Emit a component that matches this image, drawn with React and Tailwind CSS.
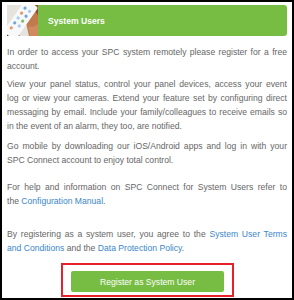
import React from "react";

const J = "block text-justify [text-align-last:justify]";
const L = "block";

function Thumb() {
  return (
    <svg width="31" height="31" viewBox="0 0 31 31" className="block shrink-0">
      <rect width="31" height="31" fill="#e6e2de" />
      <path d="M15 0 H31 V31 H22 Z" fill="#c07a4c" />
      <path d="M23 0 H31 V10 Z" fill="#8e4e2c" />
      <path d="M0 21 L0 31 L13 31 Z" fill="#3d3532" />
      <g transform="rotate(35 14 15)">
        <rect x="6" y="-5" width="15" height="40" rx="2" fill="#f6f8fa" />
        <circle cx="10.5" cy="3" r="1.6" fill="#6fa6da" />
        <circle cx="16" cy="3" r="1.6" fill="#a8cbee" />
        <circle cx="10.5" cy="9" r="1.6" fill="#e59a6a" />
        <circle cx="16" cy="9" r="1.6" fill="#6fa6da" />
        <circle cx="10.5" cy="15" r="1.6" fill="#a8cbee" />
        <circle cx="16" cy="15" r="1.6" fill="#7fbf6a" />
        <circle cx="10.5" cy="21" r="1.6" fill="#6fa6da" />
        <circle cx="16" cy="21" r="1.6" fill="#a8cbee" />
        <circle cx="10.5" cy="27" r="1.6" fill="#e59a6a" />
      </g>
      <path d="M21 21 Q27 23 31 19 V31 H23 Z" fill="#d08a60" />
    </svg>
  );
}

const A = ({ children }) => <span className="text-[#3a87c9]">{children}</span>;

export default function App() {
  return (
    <div
      className="w-[294px] h-[300px] overflow-hidden border-2 border-black bg-white pl-[5px] pr-[5px] text-[#666] text-[8.6px] leading-[14px]"
      style={{ fontFamily: '"Liberation Sans", Arial, sans-serif' }}
    >
      <div className="mt-[3px] flex h-[31px]">
        <Thumb />
        <div className="flex flex-1 items-center rounded-r-[3px] bg-[#78bd43] pl-[10px] text-[8.6px] font-bold text-white">
          System Users
        </div>
      </div>

      <p className="mt-[9px]">
        <span className={J}>In order to access your SPC system remotely please register for a free</span>
        <span className={L}>account.</span>
      </p>

      <p className="mt-[4px]">
        <span className={J}>View your panel status, control your panel devices, access your event</span>
        <span className={J}>log or view your cameras. Extend your feature set by configuring direct</span>
        <span className={J}>messaging by email. Include your family/colleagues to receive emails so</span>
        <span className={L}>in the event of an alarm, they too, are notified.</span>
      </p>

      <p className="mt-[6px]">
        <span className={J}>Go mobile by downloading our iOS/Android apps and log in with your</span>
        <span className={L}>SPC Connect account to enjoy total control.</span>
      </p>

      <p className="mt-[13px]">
        <span className={J}>For help and information on SPC Connect for System Users refer to</span>
        <span className={L}>
          the <A>Configuration Manual</A>.
        </span>
      </p>

      <p className="mt-[19px]">
        <span className={J}>
          By registering as a system user, you agree to the <A>System User Terms</A>
        </span>
        <span className={L}>
          <A>and Conditions</A> and the <A>Data Protection Policy</A>.
        </span>
      </p>

      <div className="mt-[8px] flex justify-center">
        <div className="ml-[1px] flex h-[34px] w-[173px] justify-center border-2 border-[#e8202a] pt-[6px]">
          <div className="flex h-[21px] w-[153px] items-center justify-center rounded-[2px] bg-[#78bd43] text-[8.6px] text-white">
            Register as System User
          </div>
        </div>
      </div>
    </div>
  );
}
